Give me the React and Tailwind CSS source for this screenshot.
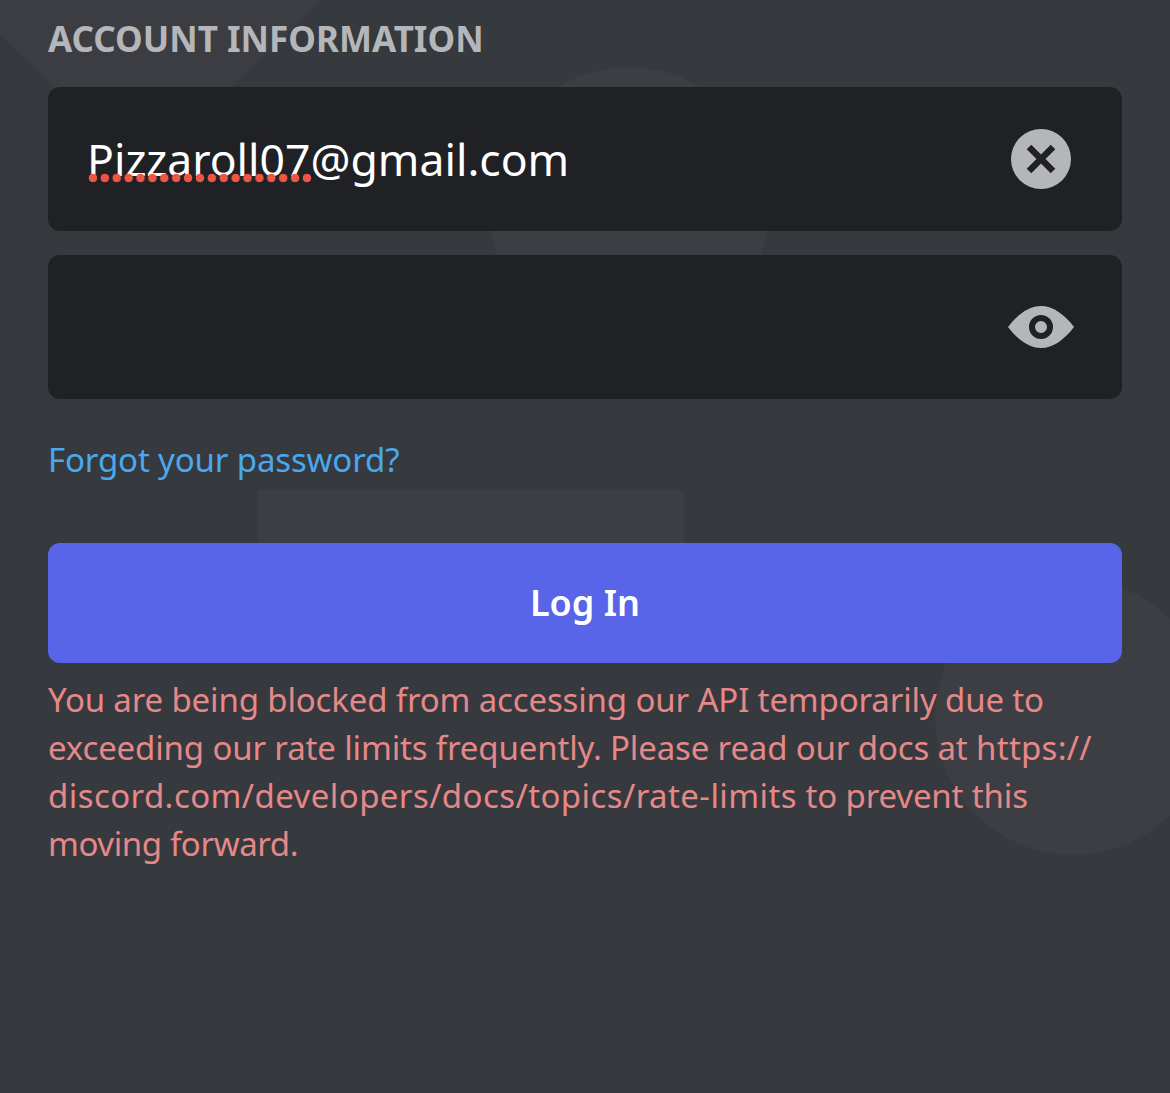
import React from 'react';

const ClearIcon = () => (
  <svg width="60" height="60" viewBox="0 0 60 60">
    <circle cx="30" cy="30" r="30" fill="#b5b6b9" />
    <path d="M18 18 L42 42 M42 18 L18 42" stroke="#202125" strokeWidth="6.5" fill="none" />
  </svg>
);

const EyeIcon = () => (
  <svg width="66" height="42" viewBox="0 0 66 42">
    <path d="M0 21 C10 8 21 0 33 0 C45 0 56 8 66 21 C56 34 45 42 33 42 C21 42 10 34 0 21 Z" fill="#b5b6b9" />
    <circle cx="33" cy="21" r="9" fill="none" stroke="#202125" strokeWidth="6" />
  </svg>
);

export default function App() {
  return (
    <div className="relative w-[1170px] h-[1093px] overflow-hidden bg-[#36393e] font-['Noto_Sans',sans-serif]">
      {/* faded background shapes */}
      <svg className="absolute left-0 top-0" width="340" height="100" viewBox="0 0 340 100">
        <path d="M0 0 L322 0 L262 58 Q245 75 225 93 L60 93 L0 35 Z" fill="#3c3d43" />
      </svg>
      <div className="absolute left-[489px] top-[67px] w-[280px] h-[280px] rounded-full bg-[#3d3e43]" />
      <div className="absolute left-[257px] top-[490px] w-[427px] h-[60px] bg-[#3d3e43]" />
      <div className="absolute left-[935px] top-[579px] w-[276px] h-[276px] rounded-full bg-[#3d3e43]" />

      <div className="relative flex flex-col px-[48px]">
        <h2 className="mt-[15px] h-[48px] text-[35px] leading-[48px] font-bold text-[#b5b6b9]">ACCOUNT INFORMATION</h2>

        <div className="mt-[24px] flex h-[144px] items-center justify-between rounded-[12px] bg-[#202125] pl-[39px] pr-[51px]">
          <span className="text-[44.5px] leading-[60px] text-white">
            <span className="relative">
              Pizzaroll07
              <span className="absolute left-0 top-[45px] h-[10px] w-[226px] bg-[radial-gradient(circle,#ee5544_4px,transparent_4.6px)] bg-[length:11.9px_10px]" />
            </span>
            @gmail.com
          </span>
          <ClearIcon />
        </div>

        <div className="mt-[24px] flex h-[144px] items-center justify-end rounded-[12px] bg-[#202125] pr-[48px]">
          <EyeIcon />
        </div>

        <a className="mt-[37px] h-[48px] text-[33px] leading-[48px] tracking-[-0.15px] text-[#4aa8ec]">Forgot your password?</a>

        <button className="mt-[59px] h-[120px] rounded-[12px] bg-[#5865e8] text-[36px] font-semibold text-white">Log In</button>

        <p className="mt-[13px] whitespace-nowrap text-[33px] leading-[48px] tracking-[-0.15px] text-[#e58888]">
          You are being blocked from accessing our API temporarily due to<br />
          exceeding our rate limits frequently. Please read our docs at <span className="tracking-[0.25px]">https://</span><br />
          <span className="tracking-[0.42px]">discord.com/developers/docs/topics/rate-limits</span> to prevent this<br />
          <span className="tracking-[-0.4px]">moving forward.</span>
        </p>
      </div>
    </div>
  );
}
